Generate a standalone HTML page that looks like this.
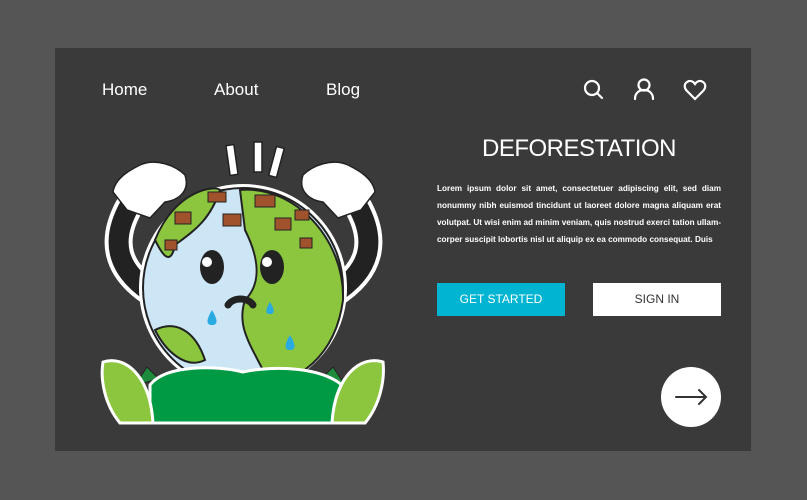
<!DOCTYPE html>
<html><head><meta charset="utf-8"><style>
body{margin:0;width:807px;height:500px;background:#555;position:relative;overflow:hidden;font-family:"Liberation Sans",sans-serif}
.card{position:absolute;left:55px;top:48px;width:696px;height:403px;background:#3a3a3a}
.nav{position:absolute;top:80px;color:#fff;font-size:17px}
h1{position:absolute;left:437px;top:135px;width:284px;margin:0;text-align:center;color:#fff;font-weight:normal;font-size:24px;letter-spacing:-0.5px}
p{position:absolute;left:437px;top:180px;width:284px;margin:0;color:#fff;font-size:8.2px;font-weight:bold;line-height:17px;text-align:justify}
.btn{position:absolute;top:283px;width:128px;height:33px;line-height:33px;text-align:center;font-size:12px}
</style></head><body>
<div class="card"></div>
<div class="nav" style="left:102px">Home</div>
<div class="nav" style="left:214px">About</div>
<div class="nav" style="left:326px">Blog</div>
<svg style="position:absolute;left:580px;top:75px" width="130" height="30" fill="none" stroke="#fff" stroke-width="2.2" stroke-linecap="round">
<circle cx="12" cy="13" r="7"/><path d="M17 18l5 5"/>
<circle cx="64" cy="10" r="5.5"/><path d="M55 24c0-6 4-9 9-9s9 3 9 9"/>
<path d="M115 24l-8-8c-3-3-3-7 0-9s6-1 8 2c2-3 5-4 8-2s3 6 0 9z"/>
</svg>
<h1>DEFORESTATION</h1>
<p>Lorem ipsum dolor sit amet, consectetuer adipiscing elit, sed diam nonummy nibh euismod tincidunt ut laoreet dolore magna aliquam erat volutpat. Ut wisi enim ad minim veniam, quis nostrud exerci tation ullam-corper suscipit lobortis nisl ut aliquip ex ea commodo consequat. Duis</p>
<div class="btn" style="left:437px;background:#00b4d2;color:#fff">GET STARTED</div>
<div class="btn" style="left:593px;background:#fff;color:#333">SIGN IN</div>
<div style="position:absolute;left:661px;top:367px;width:60px;height:60px;border-radius:50%;background:#fff"></div>
<svg style="position:absolute;left:661px;top:367px" width="60" height="60" fill="none" stroke="#333" stroke-width="2" stroke-linecap="round"><path d="M15 30h30M38 23l7 7-7 7"/></svg>
<svg style="position:absolute;left:95px;top:130px" width="300" height="300">
<path d="M35 75 C15 110 20 140 60 165" stroke="#fff" stroke-width="28" fill="none" stroke-linecap="round"/>
<path d="M262 75 C282 110 277 140 237 165" stroke="#fff" stroke-width="28" fill="none" stroke-linecap="round"/>
<path d="M35 75 C15 110 20 140 60 165" stroke="#222" stroke-width="20" fill="none" stroke-linecap="round"/>
<path d="M262 75 C282 110 277 140 237 165" stroke="#222" stroke-width="20" fill="none" stroke-linecap="round"/>
<path d="M18 62 C20 48 35 40 45 35 C60 28 80 35 90 45 C95 60 85 70 70 72 L55 88 L32 80 Z" fill="#fff" stroke="#222" stroke-width="1.5"/>
<path d="M280 62 C278 48 263 40 253 35 C238 28 218 35 208 45 C203 60 213 70 228 72 L243 88 L266 80 Z" fill="#fff" stroke="#222" stroke-width="1.5"/>
<circle cx="148" cy="158" r="104" fill="#fff"/>
<circle cx="148" cy="158" r="100" fill="#cde6f5" stroke="#222" stroke-width="2"/>
<path d="M60 110 C80 60 120 55 125 60 C115 90 100 100 80 115 C75 140 65 120 60 110z M145 60 C200 55 250 110 248 170 C240 230 200 250 175 255 C160 220 140 200 150 170 C170 150 160 120 150 100z M60 200 C80 190 100 200 110 230 C90 240 70 220 60 200z" fill="#8cc63f" stroke="#222" stroke-width="2"/>
<ellipse cx="117" cy="137" rx="12" ry="17" fill="#222"/><ellipse cx="177" cy="137" rx="12" ry="17" fill="#222"/>
<circle cx="112" cy="132" r="5" fill="#fff"/><circle cx="172" cy="132" r="5" fill="#fff"/>
<path d="M133 175c5-8 20-8 25 0" stroke="#222" stroke-width="7" fill="none" stroke-linecap="round"/>
<path d="M117 180c-6 10-6 15 0 15s6-5 0-15zM175 172c-5 8-5 12 0 12s5-4 0-12zM195 205c-6 10-6 15 0 15s6-5 0-15z" fill="#29abe2"/>
<path d="M40 255 l12 -18 12 12z M250 255 l-12 -18 -12 12z" fill="#1e8a3c" stroke="#222"/>
<path d="M55 255C70 235 120 235 148 242C180 235 230 237 250 258V293H55z" fill="#009a44" stroke="#fff" stroke-width="3"/>
<path d="M8 232C30 225 55 245 58 293H25C10 275 5 250 8 232z" fill="#8cc63f" stroke="#fff" stroke-width="3"/>
<path d="M288 232C266 225 240 245 237 293H270C285 275 290 250 288 232z" fill="#8cc63f" stroke="#fff" stroke-width="3"/>
<g fill="#fff" stroke="#222" stroke-width="1.5"><rect x="133" y="15" width="8" height="30" transform="rotate(-8 137 30)"/><rect x="159" y="12" width="8" height="30"/><rect x="178" y="17" width="8" height="30" transform="rotate(15 182 30)"/></g>
<g fill="#a0522d" stroke="#222" stroke-width="1"><rect x="113" y="62" width="18" height="10"/><rect x="128" y="84" width="18" height="12"/><rect x="80" y="82" width="16" height="12"/><rect x="160" y="65" width="20" height="12"/><rect x="180" y="88" width="16" height="12"/><rect x="200" y="80" width="14" height="10"/><rect x="70" y="110" width="12" height="10"/><rect x="205" y="108" width="12" height="10"/></g>
</svg>
</body></html>
